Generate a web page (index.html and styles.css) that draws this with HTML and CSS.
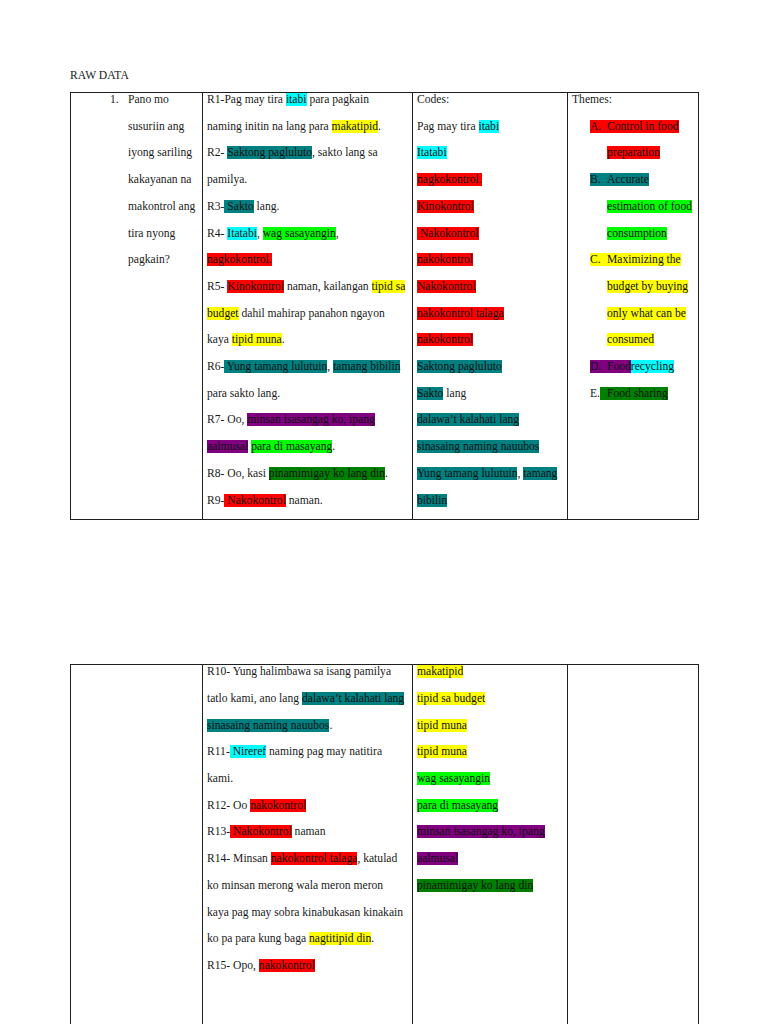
FILE: index.html
```html
<!DOCTYPE html>
<html lang="tl">
<head>
<meta charset="utf-8">
<title>Raw Data</title>
<link rel="stylesheet" href="styles.css">
</head>
<body>
<div class="page">
  <p class="title">RAW DATA</p>

  <div class="sheet">
    <div class="cell first">
      <div class="cell-in">
        <p class="q"><span class="qn">1.</span>Pano mo<br>susuriin ang<br>iyong sariling<br>kakayanan na<br>makontrol ang<br>tira nyong<br>pagkain?</p>
      </div>
    </div>
    <div class="cell">
      <div class="cell-in">
        <p>R1-Pag may tira <span class="hl cyan">itabi</span> para pagkain<br>naming initin na lang para <span class="hl yellow">makatipid</span>.</p>
        <p>R2- <span class="hl teal">Saktong pagluluto</span>, sakto lang sa<br>pamilya.</p>
        <p>R3-<span class="hl teal"> Sakto</span> lang.</p>
        <p>R4- <span class="hl cyan">Itatabi</span>, <span class="hl green">wag sasayangin</span>,<br><span class="hl red">nagkokontrol.</span></p>
        <p>R5- <span class="hl red">Kinokontrol</span> naman, kailangan <span class="hl yellow">tipid sa<br>budget</span> dahil mahirap panahon ngayon<br>kaya <span class="hl yellow">tipid muna</span>.</p>
        <p>R6-<span class="hl teal"> Yung tamang lulutuin</span>, <span class="hl teal">tamang bibilin</span><br>para sakto lang.</p>
        <p>R7- Oo, <span class="hl purple">minsan isasangag ko, ipang<br>aalmusal</span> <span class="hl green">para di masayang</span>.</p>
        <p>R8- Oo, kasi <span class="hl dgreen">pinamimigay ko lang din</span>.</p>
        <p>R9-<span class="hl red"> Nakokontrol</span> naman.</p>
      </div>
    </div>
    <div class="cell">
      <div class="cell-in">
        <p>Codes:</p>
        <p>Pag may tira <span class="hl cyan">itabi</span></p>
        <p><span class="hl cyan">Itatabi</span></p>
        <p><span class="hl red">nagkokontrol.</span></p>
        <p><span class="hl red">Kinokontrol</span></p>
        <p><span class="hl red">&nbsp;Nakokontrol</span></p>
        <p><span class="hl red">nakokontrol</span></p>
        <p><span class="hl red">Nakokontrol</span></p>
        <p><span class="hl red">nakokontrol talaga</span></p>
        <p><span class="hl red">nakokontrol</span></p>
        <p><span class="hl teal">Saktong pagluluto</span></p>
        <p><span class="hl teal">Sakto</span> lang</p>
        <p><span class="hl teal">dalawa’t kalahati lang</span></p>
        <p><span class="hl teal">sinasaing naming nauubos</span></p>
        <p><span class="hl teal">Yung tamang lulutuin</span>, <span class="hl teal">tamang<br>bibilin</span></p>
      </div>
    </div>
    <div class="cell">
      <div class="cell-in">
        <p>Themes:</p>
        <p class="theme"><span class="hl red"><span class="mk">A.</span>Control in food<br>preparation</span></p>
        <p class="theme"><span class="hl teal"><span class="mk">B.</span>Accurate</span><br><span class="hl green">estimation of food<br>consumption</span></p>
        <p class="theme"><span class="hl yellow"><span class="mk">C.</span>Maximizing the<br>budget by buying<br>only what can be<br>consumed</span></p>
        <p class="theme"><span class="hl purple"><span class="mk">D.</span>Food</span><span class="hl cyan">recycling</span></p>
        <p class="theme"><span class="mk-short">E.</span><span class="hl dgreen"><span class="gap"></span>Food sharing</span></p>
      </div>
    </div>
  </div>

  <div class="sheet second">
    <div class="cell first">
      <div class="cell-in"></div>
    </div>
    <div class="cell">
      <div class="cell-in">
        <p>R10- Yung halimbawa sa isang pamilya<br>tatlo kami, ano lang <span class="hl teal">dalawa’t kalahati lang<br>sinasaing naming nauubos</span>.</p>
        <p>R11-<span class="hl cyan"> Nireref</span> naming pag may natitira<br>kami.</p>
        <p>R12- Oo <span class="hl red">nakokontrol</span></p>
        <p>R13-<span class="hl red"> Nakokontrol</span> naman</p>
        <p>R14- Minsan <span class="hl red">nakokontrol talaga</span>, katulad<br>ko minsan merong wala meron meron<br>kaya pag may sobra kinabukasan kinakain<br>ko pa para kung baga <span class="hl yellow">nagtitipid din</span>.</p>
        <p>R15- Opo, <span class="hl red">nakokontrol</span></p>
      </div>
    </div>
    <div class="cell">
      <div class="cell-in">
        <p><span class="hl yellow">makatipid</span></p>
        <p><span class="hl yellow">tipid sa budget</span></p>
        <p><span class="hl yellow">tipid muna</span></p>
        <p><span class="hl yellow">tipid muna</span></p>
        <p><span class="hl green">wag sasayangin</span></p>
        <p><span class="hl green">para di masayang</span></p>
        <p><span class="hl purple">minsan isasangag ko, ipang</span></p>
        <p><span class="hl purple">aalmusal</span></p>
        <p><span class="hl dgreen">pinamimigay ko lang din</span></p>
      </div>
    </div>
    <div class="cell">
      <div class="cell-in"></div>
    </div>
  </div>
</div>
</body>
</html>
```

FILE: styles.css
```css
* {
  box-sizing: border-box;
}

html,
body {
  margin: 0;
  padding: 0;
  background: #ffffff;
}

body {
  font-family: "Liberation Serif", "Times New Roman", serif;
  font-size: 11.6px;
  color: #1a1a1a;
}

.page {
  height: 1024px;
  overflow: hidden;
  padding: 63px 0 0 70px;
}

p {
  margin: 0;
}

.title {
  line-height: 26.7px;
  margin-bottom: 2.3px;
}

.sheet {
  display: grid;
  grid-template-columns: 131px 210px 155px 131px;
  width: 629px;
  border: 1px solid #1f1f1f;
  line-height: 26.7px;
  white-space: nowrap;
}

.sheet.second {
  margin-top: 144px;
  height: 420px;
}

.cell {
  padding: 0 4px 5px 4px;
  border-left: 1px solid #1f1f1f;
}

.cell.first {
  border-left: none;
}

.cell-in {
  margin-top: -6px;
}

.q {
  padding-left: 53px;
  text-indent: -18px;
}

.qn {
  display: inline-block;
  width: 18px;
  text-indent: 0;
}

.theme {
  padding-left: 35px;
  text-indent: -17px;
}

.mk {
  display: inline-block;
  width: 17px;
  text-indent: 0;
}

.mk-short {
  display: inline-block;
  width: 10px;
  text-indent: 0;
}

.gap {
  display: inline-block;
  width: 7px;
}

.hl {
  color: #111111;
}

.cyan {
  background: #00ffff;
}

.yellow {
  background: #ffff00;
}

.teal {
  background: #008080;
}

.red {
  background: #ff0000;
}

.green {
  background: #00ff00;
}

.purple {
  background: #800080;
}

.dgreen {
  background: #008000;
}
```
